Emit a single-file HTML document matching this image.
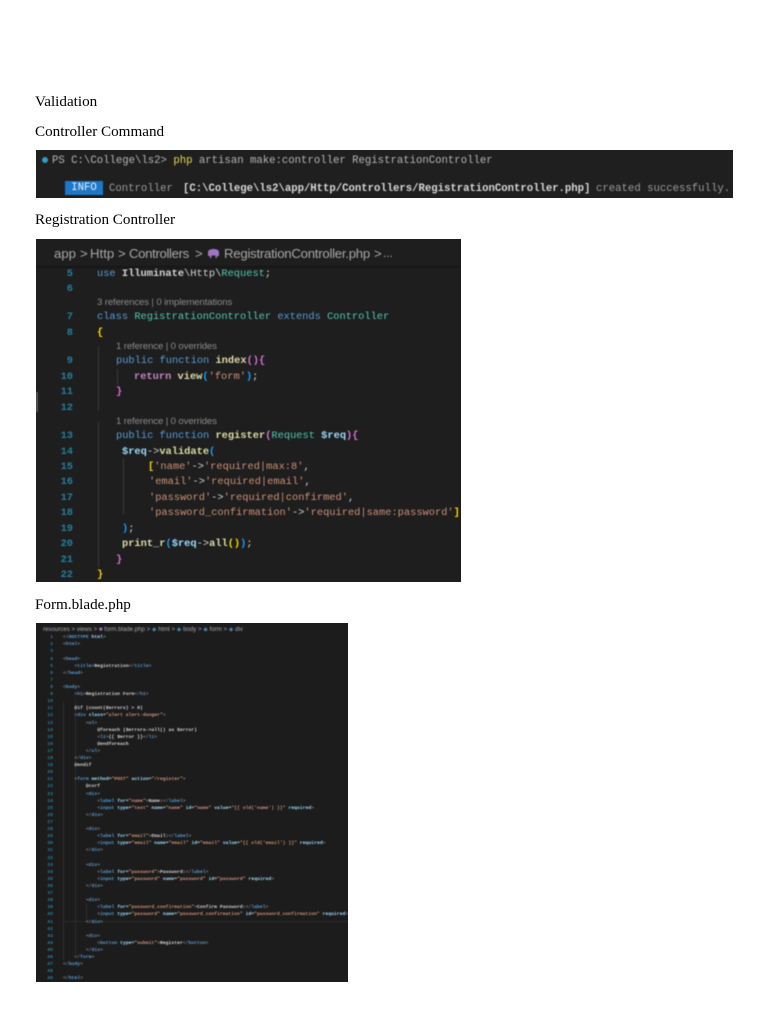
<!DOCTYPE html>
<html>
<head>
<meta charset="utf-8">
<style>
html,body{margin:0;padding:0;background:#fff;width:768px;height:1024px;overflow:hidden}
.h{position:absolute;left:35px;font:15.15px/20px "Liberation Serif",serif;color:#000;white-space:nowrap}
.box{position:absolute;overflow:hidden}
.inner{position:absolute;left:0;top:0;width:100%;height:100%;filter:blur(.4px)}
.l{position:absolute;white-space:pre;font-family:"Liberation Mono",monospace}
#term{left:36px;top:150px;width:697px;height:48px;background:#1f1f1f}
#term .l{font-size:10.65px;line-height:14px;color:#b5b5b5}
#ctl{left:36px;top:239px;width:425px;height:343px;background:#1e1e1e}
#ctl .l{font-size:10.36px;line-height:16px;margin-top:1px;color:#d4d4d4}
#ctl .n{color:#23809f;text-align:right;width:37px;left:0;font-weight:bold}
#ctl .r{font:9.6px/14px "Liberation Sans",sans-serif;margin-top:1px;color:#8c8c8c;letter-spacing:-.12px;position:absolute;white-space:pre}
.bc{position:absolute;font:13.2px/18px "Liberation Sans",sans-serif;color:#a8a8a8;white-space:pre;top:6px}
#form{left:36px;top:623px;width:312px;height:359px;background:#1c1c1c}
#code{position:absolute;left:27px;top:11.2px;margin:0;font:bold 4.75px/7.105px "Liberation Mono",monospace;color:#d4d4d4;white-space:pre}
#nums{position:absolute;left:0;width:17px;top:11.2px;margin:0;text-align:right;font:bold 4.75px/7.105px "Liberation Mono",monospace;color:#23809f;white-space:pre}
.g{position:absolute;width:1px;background:#3a3a3a}
#form .g{background:#2e2e2e}
.k{color:#569cd6}.t{color:#4ec9b0}.s{color:#ce9178}.f{color:#dcdcaa;font-weight:bold}.v{color:#9cdcfe;font-weight:bold}.w{color:#d4d4d4;font-weight:bold}.p{color:#c586c0;font-weight:bold}.y{color:#ffd700;font-weight:bold}.m{color:#da70d6;font-weight:bold}.b{color:#179fff;font-weight:bold}.o{color:#808080}
#form .k,#form .t,#form .s{font-weight:bold}
</style>
</head>
<body>
<div class="h" style="top:92px">Validation</div>
<div class="h" style="top:122px">Controller Command</div>

<div class="box" id="term"><div class="inner">
<div style="position:absolute;left:6px;top:6.500px;width:6px;height:6px;border-radius:50%;background:#2b9fc8"></div>
<div class="l" style="left:16px;top:4px">PS C:\College\ls2&gt; <span style="color:#e5d94a">php</span> artisan make:controller RegistrationController</div>
<div style="position:absolute;left:29px;top:31px;width:38px;height:14px;background:#1d78c8;color:#e8f2fb;font:10.65px/14px 'Liberation Mono',monospace;text-align:center">INFO</div>
<div class="l" style="left:73px;top:31.500px;color:#9a9a9a">Controller</div>
<div class="l" style="left:147px;top:31.500px;color:#d8d8d8;font-weight:bold;letter-spacing:-.02px">[C:\College\ls2\app/Http/Controllers/RegistrationController.php]</div>
<div class="l" style="left:560px;top:31.500px;color:#9a9a9a">created successfully.</div>
</div></div>

<div class="h" style="top:210px">Registration Controller</div>

<div class="box" id="ctl"><div class="inner">
<div class="bc" style="left:18px">app</div>
<div class="bc" style="left:44px">&gt;</div>
<div class="bc" style="left:54px">Http</div>
<div class="bc" style="left:82px">&gt;</div>
<div class="bc" style="left:93px;letter-spacing:-.35px">Controllers</div>
<div class="bc" style="left:159px">&gt;</div>
<svg style="position:absolute;left:171px;top:9px" width="13" height="11" viewBox="0 0 13 11"><path d="M1 4.5C1 2 3 1 6.500 1S12 2 12 4.500V8H10V10H8.500V7.500H4.500V10H3V8H1Z" fill="#a074c4"/></svg>
<div class="bc" style="left:188px;letter-spacing:-.25px">RegistrationController.php</div>
<div class="bc" style="left:338px">&gt;</div>
<div class="bc" style="left:347px;font-size:11.500px">...</div>
<div style="position:absolute;left:0;top:27px;width:425px;height:2px;background:#161616"></div>

<div class="g" style="left:62px;top:108px;height:64px"></div>
<div class="g" style="left:62px;top:183px;height:145px"></div>
<div class="g" style="left:81px;top:130px;height:16px"></div>
<div class="g" style="left:87px;top:219px;height:56px"></div>
<div style="position:absolute;left:0;top:153px;width:2px;height:20px;background:#555"></div>

<div class="l n" style="top:26px">5</div>
<div class="l" style="left:61px;top:26px"><span class="k">use</span> <span class="w">Illuminate</span>\Http\<span class="t">Request</span>;</div>
<div class="l n" style="top:41px">6</div>
<div class="r" style="left:61px;top:56px">3 references | 0 implementations</div>
<div class="l n" style="top:69px">7</div>
<div class="l" style="left:61px;top:69px"><span class="k">class</span> <span class="t">RegistrationController</span> <span class="k">extends</span> <span class="t">Controller</span></div>
<div class="l n" style="top:85px">8</div>
<div class="l" style="left:61px;top:85px"><span class="y">{</span></div>
<div class="r" style="left:80px;top:100px">1 reference | 0 overrides</div>
<div class="l n" style="top:113px">9</div>
<div class="l" style="left:80px;top:113px"><span class="k">public function</span> <span class="f">index</span><span class="m">()</span><span class="m">{</span></div>
<div class="l n" style="top:129px">10</div>
<div class="l" style="left:98px;top:129px"><span class="p">return</span> <span class="f">view</span><span class="b">(</span><span class="s">'form'</span><span class="b">)</span>;</div>
<div class="l n" style="top:144px">11</div>
<div class="l" style="left:80px;top:144px"><span class="m">}</span></div>
<div class="l n" style="top:160px">12</div>
<div class="r" style="left:80px;top:175px">1 reference | 0 overrides</div>
<div class="l n" style="top:188px">13</div>
<div class="l" style="left:80px;top:188px"><span class="k">public function</span> <span class="f">register</span><span class="m">(</span><span class="t">Request</span> <span class="v">$req</span><span class="m">){</span></div>
<div class="l n" style="top:204px">14</div>
<div class="l" style="left:86px;top:204px"><span class="v">$req</span>-&gt;<span class="f">validate</span><span class="b">(</span></div>
<div class="l n" style="top:219px">15</div>
<div class="l" style="left:112px;top:219px"><span class="y">[</span><span class="s">'name'</span>-&gt;<span class="s">'required|max:8'</span>,</div>
<div class="l n" style="top:234px">16</div>
<div class="l" style="left:113px;top:234px"><span class="s">'email'</span>-&gt;<span class="s">'required|email'</span>,</div>
<div class="l n" style="top:250px">17</div>
<div class="l" style="left:113px;top:250px"><span class="s">'password'</span>-&gt;<span class="s">'required|confirmed'</span>,</div>
<div class="l n" style="top:265px">18</div>
<div class="l" style="left:113px;top:265px"><span class="s">'password_confirmation'</span>-&gt;<span class="s">'required|same:password'</span><span class="y">]</span></div>
<div class="l n" style="top:281px">19</div>
<div class="l" style="left:86px;top:281px"><span class="b">)</span>;</div>
<div class="l n" style="top:296px">20</div>
<div class="l" style="left:86px;top:296px"><span class="f">print_r</span><span class="b">(</span><span class="v">$req</span>-&gt;<span class="f">all</span><span class="y">()</span><span class="b">)</span>;</div>
<div class="l n" style="top:312px">21</div>
<div class="l" style="left:80px;top:312px"><span class="m">}</span></div>
<div class="l n" style="top:327px">22</div>
<div class="l" style="left:61px;top:327px"><span class="y">}</span></div>
</div></div>

<div class="h" style="top:595px">Form.blade.php</div>

<div class="box" id="form"><div class="inner">
<div style="position:absolute;left:7px;top:2px;font:6.1px/9px 'Liberation Sans',sans-serif;color:#a8a8a8;white-space:pre">resources &gt; views &gt; <span style="color:#a074c4">&#9632;</span> form.blade.php &gt; <span style="color:#4fa3d1">&#9672;</span> html &gt; <span style="color:#4fa3d1">&#9672;</span> body &gt; <span style="color:#4fa3d1">&#9672;</span> form &gt; <span style="color:#4fa3d1">&#9672;</span> div</div>
<div class="g" style="left:27px;top:78px;height:260px"></div>
<div class="g" style="left:39px;top:78px;height:253px"></div>
<div class="g" style="left:50px;top:280px;height:20px"></div>
<div style="position:absolute;left:27px;top:298px;width:285px;height:1px;background:#2c2c2c"></div>
<pre id="nums">1
2
3
4
5
6
7
8
9
10
11
12
13
14
15
16
17
18
19
20
21
22
23
24
25
26
27
28
29
30
31
32
33
34
35
36
37
38
39
40
41
42
43
44
45
46
47
48
49</pre>
<pre id="code"><span class="o">&lt;</span><span class="k">!DOCTYPE</span> <span class="v">html</span><span class="o">&gt;</span>
<span class="o">&lt;</span><span class="k">html</span><span class="o">&gt;</span>

<span class="o">&lt;</span><span class="k">head</span><span class="o">&gt;</span>
    <span class="o">&lt;</span><span class="k">title</span><span class="o">&gt;</span>Registration<span class="o">&lt;/</span><span class="k">title</span><span class="o">&gt;</span>
<span class="o">&lt;/</span><span class="k">head</span><span class="o">&gt;</span>

<span class="o">&lt;</span><span class="k">body</span><span class="o">&gt;</span>
    <span class="o">&lt;</span><span class="k">h1</span><span class="o">&gt;</span>Registration Form<span class="o">&lt;/</span><span class="k">h1</span><span class="o">&gt;</span>

    @if (count($errors) &gt; 0)
    <span class="o">&lt;</span><span class="k">div</span> <span class="v">class</span>=<span class="s">"alert alert-danger"</span><span class="o">&gt;</span>
        <span class="o">&lt;</span><span class="k">ul</span><span class="o">&gt;</span>
            @foreach ($errors-&gt;all() as $error)
            <span class="o">&lt;</span><span class="k">li</span><span class="o">&gt;</span>{{ $error }}<span class="o">&lt;/</span><span class="k">li</span><span class="o">&gt;</span>
            @endforeach
        <span class="o">&lt;/</span><span class="k">ul</span><span class="o">&gt;</span>
    <span class="o">&lt;/</span><span class="k">div</span><span class="o">&gt;</span>
    @endif

    <span class="o">&lt;</span><span class="k">form</span> <span class="v">method</span>=<span class="s">"POST"</span> <span class="v">action</span>=<span class="s">"/register"</span><span class="o">&gt;</span>
        @csrf
        <span class="o">&lt;</span><span class="k">div</span><span class="o">&gt;</span>
            <span class="o">&lt;</span><span class="k">label</span> <span class="v">for</span>=<span class="s">"name"</span><span class="o">&gt;</span>Name:<span class="o">&lt;/</span><span class="k">label</span><span class="o">&gt;</span>
            <span class="o">&lt;</span><span class="k">input</span> <span class="v">type</span>=<span class="s">"text"</span> <span class="v">name</span>=<span class="s">"name"</span> <span class="v">id</span>=<span class="s">"name"</span> <span class="v">value</span>=<span class="s">"{{ old('name') }}"</span> <span class="v">required</span><span class="o">&gt;</span>
        <span class="o">&lt;/</span><span class="k">div</span><span class="o">&gt;</span>

        <span class="o">&lt;</span><span class="k">div</span><span class="o">&gt;</span>
            <span class="o">&lt;</span><span class="k">label</span> <span class="v">for</span>=<span class="s">"email"</span><span class="o">&gt;</span>Email:<span class="o">&lt;/</span><span class="k">label</span><span class="o">&gt;</span>
            <span class="o">&lt;</span><span class="k">input</span> <span class="v">type</span>=<span class="s">"email"</span> <span class="v">name</span>=<span class="s">"email"</span> <span class="v">id</span>=<span class="s">"email"</span> <span class="v">value</span>=<span class="s">"{{ old('email') }}"</span> <span class="v">required</span><span class="o">&gt;</span>
        <span class="o">&lt;/</span><span class="k">div</span><span class="o">&gt;</span>

        <span class="o">&lt;</span><span class="k">div</span><span class="o">&gt;</span>
            <span class="o">&lt;</span><span class="k">label</span> <span class="v">for</span>=<span class="s">"password"</span><span class="o">&gt;</span>Password:<span class="o">&lt;/</span><span class="k">label</span><span class="o">&gt;</span>
            <span class="o">&lt;</span><span class="k">input</span> <span class="v">type</span>=<span class="s">"password"</span> <span class="v">name</span>=<span class="s">"password"</span> <span class="v">id</span>=<span class="s">"password"</span> <span class="v">required</span><span class="o">&gt;</span>
        <span class="o">&lt;/</span><span class="k">div</span><span class="o">&gt;</span>

        <span class="o">&lt;</span><span class="k">div</span><span class="o">&gt;</span>
            <span class="o">&lt;</span><span class="k">label</span> <span class="v">for</span>=<span class="s">"password_confirmation"</span><span class="o">&gt;</span>Confirm Password:<span class="o">&lt;/</span><span class="k">label</span><span class="o">&gt;</span>
            <span class="o">&lt;</span><span class="k">input</span> <span class="v">type</span>=<span class="s">"password"</span> <span class="v">name</span>=<span class="s">"password_confirmation"</span> <span class="v">id</span>=<span class="s">"password_confirmation"</span> <span class="v">required</span><span class="o">&gt;</span>
        <span class="o">&lt;/</span><span class="k">div</span><span class="o">&gt;</span>

        <span class="o">&lt;</span><span class="k">div</span><span class="o">&gt;</span>
            <span class="o">&lt;</span><span class="k">button</span> <span class="v">type</span>=<span class="s">"submit"</span><span class="o">&gt;</span>Register<span class="o">&lt;/</span><span class="k">button</span><span class="o">&gt;</span>
        <span class="o">&lt;/</span><span class="k">div</span><span class="o">&gt;</span>
    <span class="o">&lt;/</span><span class="k">form</span><span class="o">&gt;</span>
<span class="o">&lt;/</span><span class="k">body</span><span class="o">&gt;</span>

<span class="o">&lt;/</span><span class="k">html</span><span class="o">&gt;</span></pre>
</div></div>
</body>
</html>
